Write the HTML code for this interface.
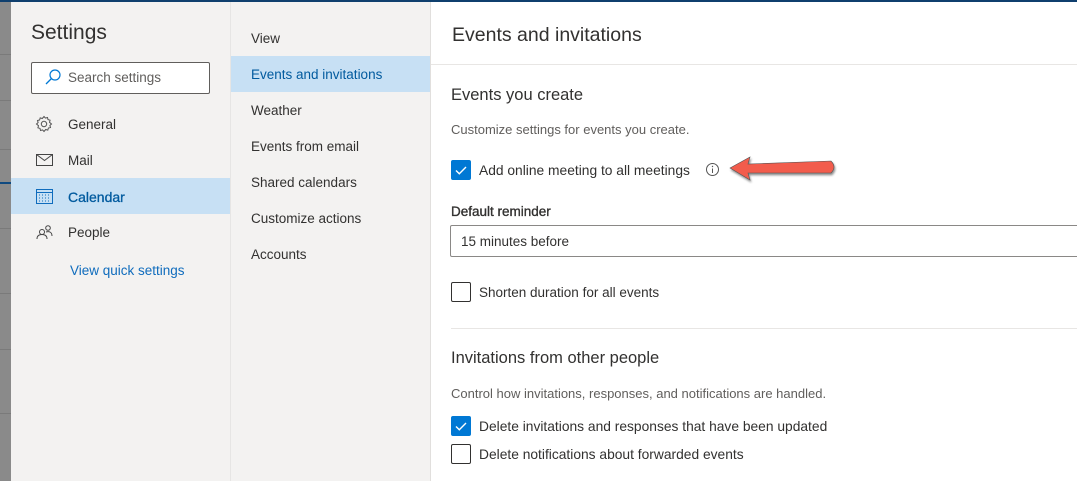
<!DOCTYPE html>
<html><head><style>
*{margin:0;padding:0;box-sizing:border-box}
body{width:1077px;height:481px;overflow:hidden;position:relative;font-family:"Liberation Sans",sans-serif;color:#323130;background:#fff}
.abs{position:absolute}
.t{position:absolute;font-size:13.5px;white-space:nowrap}
.cb{position:absolute;width:20px;height:20px;border:1px solid #323130;border-radius:2px;background:#fff}
.cb.on{background:#0078d4;border-color:#0078d4}
</style></head><body>
<div class="abs" style="left:0;top:0;width:1077px;height:2px;background:#0f3f6e"></div>
<div class="abs" style="left:0;top:2px;width:11px;height:479px;background:#8a8a8a"></div>
<div class="abs" style="left:0;top:182px;width:11px;height:2px;background:#104a80"></div>
<div class="abs" style="left:0;top:54px;width:11px;height:1px;background:#7a7a7a"></div>
<div class="abs" style="left:0;top:100px;width:11px;height:1px;background:#7a7a7a"></div>
<div class="abs" style="left:0;top:149px;width:11px;height:1px;background:#7a7a7a"></div>
<div class="abs" style="left:0;top:228px;width:11px;height:1px;background:#7a7a7a"></div>
<div class="abs" style="left:0;top:293px;width:11px;height:1px;background:#7a7a7a"></div>
<div class="abs" style="left:0;top:349px;width:11px;height:1px;background:#7a7a7a"></div>
<div class="abs" style="left:0;top:413px;width:11px;height:1px;background:#7a7a7a"></div>

<div class="abs" style="left:11px;top:2px;width:220px;height:479px;background:#f3f2f1"></div>
<div class="abs" style="left:230px;top:2px;width:1px;height:479px;background:#e6e5e4"></div>
<div class="abs" style="left:231px;top:2px;width:199px;height:479px;background:#f3f2f1"></div>
<div class="abs" style="left:430px;top:2px;width:1px;height:479px;background:#e1dfdd"></div>

<div class="t" style="left:31px;top:21px;font-size:21px">Settings</div>
<div class="abs" style="left:31px;top:62px;width:179px;height:32px;border:1px solid #605e5c;border-radius:2px;background:#fff"></div>
<svg class="abs" style="left:44px;top:68px" width="18" height="18" viewBox="0 0 18 18"><circle cx="11" cy="7" r="5" fill="none" stroke="#0078d4" stroke-width="1.2"/><line x1="7.5" y1="10.5" x2="2" y2="16" stroke="#0078d4" stroke-width="1.3"/></svg>
<div class="t" style="left:68px;top:70px;color:#605e5c">Search settings</div>

<svg class="abs" style="left:35px;top:115px" width="18" height="18" viewBox="0 0 18 18"><circle cx="9" cy="9" r="2.7" fill="none" stroke="#555" stroke-width="1"/><path d="M9 1.5l1.4 1.6 2.1-.6.5 2.1 2.1.6-.6 2.1L16.5 9l-1.6 1.4.6 2.1-2.1.5-.6 2.1-2.1-.6L9 16.5l-1.4-1.6-2.1.6-.5-2.1-2.1-.6.6-2.1L1.5 9l1.6-1.4-.6-2.1 2.1-.5.6-2.1 2.1.6z" fill="none" stroke="#555" stroke-width="1"/></svg>
<div class="t" style="left:68px;top:117px">General</div>
<svg class="abs" style="left:36px;top:154px" width="17" height="12" viewBox="0 0 17 12"><rect x="0.5" y="0.5" width="16" height="11" fill="none" stroke="#444"/><path d="M0.5 0.5L8.5 6.5L16.5 0.5" fill="none" stroke="#444"/></svg>
<div class="t" style="left:68px;top:153px">Mail</div>
<div class="abs" style="left:11px;top:178px;width:219px;height:36px;background:#c7e0f4"></div>
<svg class="abs" style="left:36px;top:188px" width="17" height="16" viewBox="0 0 17 16"><rect x="0.5" y="1.5" width="16" height="14" fill="none" stroke="#0f6cbd"/><line x1="0.5" y1="4.5" x2="16.5" y2="4.5" stroke="#0f6cbd"/><path d="M3 7h1M6 7h1M9 7h1M12 7h1M3 10h1M6 10h1M9 10h1M12 10h1M3 13h1M6 13h1M9 13h1M12 13h1" stroke="#0f6cbd"/></svg>
<div class="t" style="left:68px;top:189px;color:#005a9e;font-size:14px;-webkit-text-stroke:0.3px #005a9e">Calendar</div>
<svg class="abs" style="left:36px;top:224px" width="17" height="17" viewBox="0 0 17 17"><circle cx="6" cy="8" r="2.5" fill="none" stroke="#444"/><path d="M1 15c0-3 2-4.5 5-4.5s5 1.5 5 4.5" fill="none" stroke="#444"/><circle cx="12" cy="4" r="2.3" fill="none" stroke="#444"/><path d="M10 8c3-1 6 0 6 4" fill="none" stroke="#444"/></svg>
<div class="t" style="left:68px;top:225px">People</div>
<div class="t" style="left:70px;top:263px;color:#0f6cbd">View quick settings</div>

<div class="t" style="left:251px;top:31px">View</div>
<div class="abs" style="left:231px;top:56px;width:199px;height:36px;background:#c7e0f4"></div>
<div class="t" style="left:251px;top:67px;color:#005a9e">Events and invitations</div>
<div class="t" style="left:251px;top:103px">Weather</div>
<div class="t" style="left:251px;top:139px">Events from email</div>
<div class="t" style="left:251px;top:175px">Shared calendars</div>
<div class="t" style="left:251px;top:211px">Customize actions</div>
<div class="t" style="left:251px;top:247px">Accounts</div>

<div class="t" style="left:452px;top:24px;font-size:19.5px">Events and invitations</div>
<div class="abs" style="left:431px;top:64px;width:646px;height:1px;background:#e8e6e4"></div>
<div class="t" style="left:451px;top:86px;font-size:16.5px">Events you create</div>
<div class="t" style="left:451px;top:122px;color:#605e5c;font-size:13px">Customize settings for events you create.</div>
<div class="cb on" style="left:451px;top:160px"></div>
<svg class="abs" style="left:451px;top:160px" width="20" height="20"><path d="M5 10.5l3.3 3.3L15 7" fill="none" stroke="#fff" stroke-width="1.4"/></svg>
<div class="t" style="left:479px;top:163px;font-size:13.8px">Add online meeting to all meetings</div>
<svg class="abs" style="left:705px;top:162px" width="15" height="15"><circle cx="7.5" cy="7.5" r="6" fill="none" stroke="#555"/><line x1="7.5" y1="6.5" x2="7.5" y2="11" stroke="#555"/><circle cx="7.5" cy="4.5" r="0.7" fill="#555"/></svg>
<svg class="abs" style="left:726px;top:152px" width="115" height="32"><path d="M4 16L24 5L22 12L105 9Q111 15 105 21L22 21L24 28Z" fill="#f25c4c" stroke="#555" stroke-width="0.6" style="filter:drop-shadow(1px 2px 1px rgba(0,0,0,.45))"/></svg>
<div class="t" style="left:451px;top:204px;font-size:13.5px;-webkit-text-stroke:0.35px #323130">Default reminder</div>
<div class="abs" style="left:450px;top:225px;width:640px;height:32px;border:1px solid #8a8886;border-radius:2px"></div>
<div class="t" style="left:461px;top:234px">15 minutes before</div>
<div class="cb" style="left:451px;top:282px"></div>
<div class="t" style="left:479px;top:285px">Shorten duration for all events</div>
<div class="abs" style="left:451px;top:328px;width:626px;height:1px;background:#e8e6e4"></div>
<div class="t" style="left:451px;top:349px;font-size:16.5px">Invitations from other people</div>
<div class="t" style="left:451px;top:386px;color:#605e5c;font-size:13px">Control how invitations, responses, and notifications are handled.</div>
<div class="cb on" style="left:451px;top:416px"></div>
<svg class="abs" style="left:451px;top:416px" width="20" height="20"><path d="M5 10.5l3.3 3.3L15 7" fill="none" stroke="#fff" stroke-width="1.4"/></svg>
<div class="t" style="left:479px;top:419px;font-size:13.8px">Delete invitations and responses that have been updated</div>
<div class="cb" style="left:451px;top:444px"></div>
<div class="t" style="left:479px;top:447px;font-size:13.8px">Delete notifications about forwarded events</div>
</body></html>
